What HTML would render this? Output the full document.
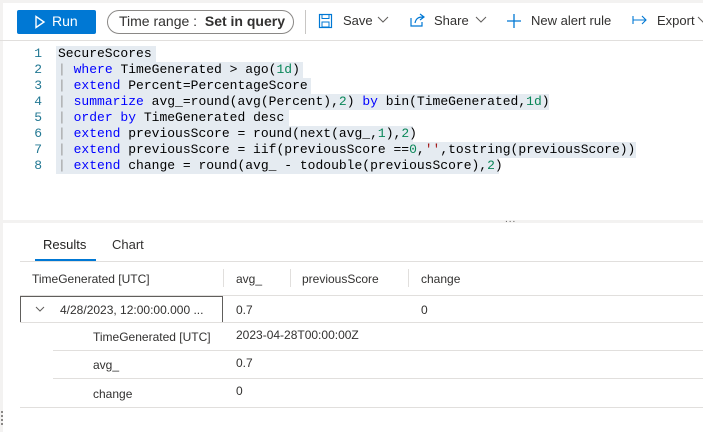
<!DOCTYPE html>
<html><head><style>
body{margin:0;width:703px;height:432px;overflow:hidden;background:#fff;font-family:"Liberation Sans",sans-serif;position:relative;color:#323130}
.a{position:absolute;white-space:nowrap}
.code{font-family:"Liberation Mono",monospace;font-size:13px;line-height:16px}
.ln{color:#237893;position:absolute;left:30px;width:12px;text-align:right}
.hl{position:absolute;left:56px;background:#e5ebf1;height:16px}
.kw{color:#0000ff}.num{color:#098658}.str{color:#a31515}
.t{font-size:12px;color:#323130}
</style></head><body>
<div class="a" style="left:0;top:0;width:703px;height:3px;background:#f3f2f1"></div>
<div class="a" style="left:0;top:0;width:3px;height:432px;background:#f3f2f1"></div>
<div class="a" style="left:1px;top:411px;width:2px;height:14px;border-left:2px dotted #8a8886;box-sizing:border-box"></div>
<div class="a" style="left:0;top:40px;width:703px;height:1px;background:#e1dfdd"></div>
<div class="a" style="left:17px;top:10px;width:79px;height:24px;background:#0078d4;border-radius:2px"></div>
<svg class="a" style="left:34px;top:15px" width="12" height="14"><path d="M2 1.5 L10 7 L2 12.5Z" fill="none" stroke="#fff" stroke-width="1.4"/></svg>
<div class="a" style="left:52px;top:13px;color:#fff;font-size:14px">Run</div>
<div class="a" style="left:107px;top:10px;width:185px;height:22px;border:1px solid #8a8886;border-radius:12px"></div>
<div class="a" style="left:119px;top:13px;font-size:14px">Time range :&nbsp; <b style="font-weight:600">Set in query</b></div>
<div class="a" style="left:305px;top:10px;width:1px;height:24px;background:#c8c6c4"></div>
<svg class="a" style="left:318px;top:13px" width="16" height="16"><rect x="1.5" y="1.5" width="12" height="13" fill="none" stroke="#0078d4" stroke-width="1.2"/><rect x="4" y="1.5" width="7" height="4" fill="none" stroke="#0078d4"/><rect x="4" y="9" width="7" height="5" fill="none" stroke="#0078d4"/></svg>
<div class="a" style="left:343px;top:13px;font-size:13px">Save</div>
<svg class="a" style="left:377px;top:16px" width="12" height="8"><path d="M1 1 L6 6 L11 1" fill="none" stroke="#605e5c"/></svg>
<svg class="a" style="left:409px;top:12px" width="18" height="16"><path d="M2 6 V14 H13 V10 M6 11 C7 6 10 5 14 5 M11 2 L15 5 L11 8" fill="none" stroke="#0078d4" stroke-width="1.2"/></svg>
<div class="a" style="left:434px;top:13px;font-size:13px">Share</div>
<svg class="a" style="left:475px;top:16px" width="12" height="8"><path d="M1 1 L6 6 L11 1" fill="none" stroke="#605e5c"/></svg>
<svg class="a" style="left:506px;top:13px" width="16" height="16"><path d="M8 1 V15 M1 8 H15" stroke="#0078d4" stroke-width="1.3"/></svg>
<div class="a" style="left:531px;top:13px;font-size:13px">New alert rule</div>
<svg class="a" style="left:632px;top:15px" width="16" height="10"><path d="M1 1 V9 M1 5 H14 M10 1 L14 5 L10 9" fill="none" stroke="#0078d4" stroke-width="1.1"/></svg>
<div class="a" style="left:657px;top:13px;font-size:13px">Export</div>
<svg class="a" style="left:697px;top:16px" width="8" height="8"><path d="M1 1 L6 6 L11 1" fill="none" stroke="#605e5c"/></svg>

<div class="hl" style="top:46px;width:100px"></div>
<div class="hl" style="top:62px;width:247px"></div>
<div class="hl" style="top:78px;width:255px"></div>
<div class="hl" style="top:94px;width:493px"></div>
<div class="hl" style="top:110px;width:233px"></div>
<div class="hl" style="top:126px;width:357px"></div>
<div class="hl" style="top:142px;width:580px"></div>
<div class="hl" style="top:158px;width:443px"></div>
<div class="code">
<div class="ln" style="top:46px">1</div><div class="ln" style="top:62px">2</div><div class="ln" style="top:78px">3</div><div class="ln" style="top:94px">4</div><div class="ln" style="top:110px">5</div><div class="ln" style="top:126px">6</div><div class="ln" style="top:142px">7</div><div class="ln" style="top:158px">8</div>
<div class="a" style="left:58px;top:46px;color:#000">SecureScores</div>
<div class="a" style="left:58px;top:62px;color:#000"><span style="color:#999">|</span> <span class="kw">where</span> TimeGenerated &gt; ago(<span class="num">1d</span>)</div>
<div class="a" style="left:58px;top:78px;color:#000"><span style="color:#999">|</span> <span class="kw">extend</span> Percent=PercentageScore</div>
<div class="a" style="left:58px;top:94px;color:#000"><span style="color:#999">|</span> <span class="kw">summarize</span> avg_=round(avg(Percent),<span class="num">2</span>) <span class="kw">by</span> bin(TimeGenerated,<span class="num">1d</span>)</div>
<div class="a" style="left:58px;top:110px;color:#000"><span style="color:#999">|</span> <span class="kw">order by</span> TimeGenerated desc</div>
<div class="a" style="left:58px;top:126px;color:#000"><span style="color:#999">|</span> <span class="kw">extend</span> previousScore = round(next(avg_,<span class="num">1</span>),<span class="num">2</span>)</div>
<div class="a" style="left:58px;top:142px;color:#000"><span style="color:#999">|</span> <span class="kw">extend</span> previousScore = iif(previousScore ==<span class="num">0</span>,<span class="str">''</span>,tostring(previousScore))</div>
<div class="a" style="left:58px;top:158px;color:#000"><span style="color:#999">|</span> <span class="kw">extend</span> change = round(avg_ - todouble(previousScore),<span class="num">2</span>)</div>
</div>

<div class="a" style="left:0;top:220px;width:703px;height:3px;background:#f3f2f1"></div>
<div class="a" style="left:505px;top:214px;font-size:10px;color:#605e5c;letter-spacing:1px">...</div>
<div class="a" style="left:43px;top:237px;font-size:13px;color:#201f1e">Results</div>
<div class="a" style="left:112px;top:237px;font-size:13px;color:#323130">Chart</div>
<div class="a" style="left:35px;top:259px;width:61px;height:2px;background:#0078d4"></div>
<div class="a" style="left:20px;top:261px;width:683px;height:1px;background:#e1dfdd"></div>

<div class="a t" style="left:32px;top:272px">TimeGenerated [UTC]</div>
<div class="a" style="left:223px;top:269px;width:1px;height:18px;background:#e1dfdd"></div>
<div class="a t" style="left:236px;top:272px">avg_</div>
<div class="a" style="left:290px;top:269px;width:1px;height:18px;background:#e1dfdd"></div>
<div class="a t" style="left:302px;top:272px">previousScore</div>
<div class="a" style="left:408px;top:269px;width:1px;height:18px;background:#e1dfdd"></div>
<div class="a t" style="left:421px;top:272px">change</div>

<div class="a" style="left:20px;top:295px;width:683px;height:1px;background:#e1dfdd"></div>
<div class="a" style="left:20px;top:296px;width:201px;height:25px;border:1px solid #605e5c"></div>
<svg class="a" style="left:35px;top:306px" width="10" height="6"><path d="M1 1 L5 5 L9 1" fill="none" stroke="#605e5c"/></svg>
<div class="a t" style="left:60px;top:303px">4/28/2023, 12:00:00.000 ...</div>
<div class="a t" style="left:236px;top:303px">0.7</div>
<div class="a t" style="left:421px;top:303px">0</div>
<div class="a" style="left:20px;top:322px;width:683px;height:1px;background:#e1dfdd"></div>

<div class="a t" style="left:93px;top:330px">TimeGenerated [UTC]</div>
<div class="a t" style="left:236px;top:328px">2023-04-28T00:00:00Z</div>
<div class="a" style="left:53px;top:350px;width:650px;height:1px;background:#e1dfdd"></div>
<div class="a t" style="left:93px;top:358px">avg_</div>
<div class="a t" style="left:236px;top:356px">0.7</div>
<div class="a" style="left:53px;top:378px;width:650px;height:1px;background:#e1dfdd"></div>
<div class="a t" style="left:93px;top:387px">change</div>
<div class="a t" style="left:236px;top:384px">0</div>
<div class="a" style="left:20px;top:407px;width:683px;height:1px;background:#e1dfdd"></div>
</body></html>
